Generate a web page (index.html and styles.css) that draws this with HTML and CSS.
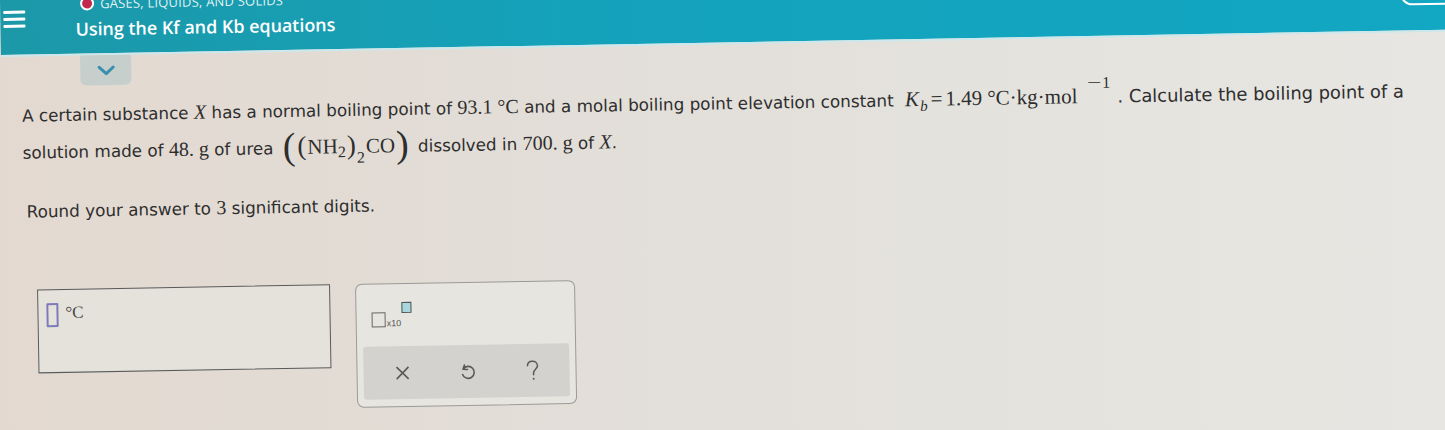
FILE: index.html
```html
<!DOCTYPE html>
<html>
<head>
<meta charset="utf-8">
<link rel="stylesheet" href="styles.css">
</head>
<body>
<div class="screen">
  <header class="topbar">
    <div class="menu"><span></span><span></span><span></span></div>
    <div class="heading">
      <div class="crumb"><span class="dot"></span>GASES, LIQUIDS, AND SOLIDS</div>
      <div class="title">Using the Kf and Kb equations</div>
    </div>
    <div class="corner-btn"></div>
  </header>
  <div class="tab">
    <svg width="18" height="11" viewBox="0 0 18 11"><path d="M2 2 L9 8.5 L16 2" fill="none" stroke="#3a8fb0" stroke-width="3" stroke-linecap="round" stroke-linejoin="round"/></svg>
  </div>
  <main class="content">
    <p class="q">A certain substance <i class="m">X</i> has a normal boiling point of <span class="m">93.1&nbsp;°C</span> and a molal boiling point elevation constant <span class="m kb"><i>K</i><sub class="sb"><i>b</i></sub><span class="eq">=</span>1.49&nbsp;°C·kg·mol<sup class="sp"><span class="minus">−</span>1</sup></span><span class="far">. Calculate the boiling point of a</span><br>solution made of <span class="m">48.&nbsp;g</span> of urea <span class="m urea"><span class="bp">(</span><span class="ip">(</span>NH<sub class="s2">2</sub><span class="ip">)</span><sub class="s2b">2</sub>CO<span class="bp">)</span></span> dissolved in <span class="m">700.&nbsp;g</span> of <i class="m">X</i>.</p>
    <p class="round">Round your answer to <span class="m">3</span> significant digits.</p>
    <div class="answer-row">
      <div class="answer-box">
        <span class="slot"></span><span class="unit">°C</span>
      </div>
      <div class="tools">
        <div class="sci">
          <span class="sq"></span><span class="x10">x10</span><span class="sup-sq"></span>
        </div>
        <div class="band">
          <svg class="ico" width="16" height="16" viewBox="0 0 16 16"><path d="M2 2 L14 14 M14 2 L2 14" stroke="#5a5a5a" stroke-width="1.6" fill="none"/></svg>
          <svg class="ico" width="16" height="18" viewBox="0 0 16 18"><path d="M5 2 L3.5 6.2 L8 6.6 M3.8 6 A6 6 0 1 1 3 11.5" stroke="#5a5a5a" stroke-width="1.6" fill="none" stroke-linecap="round" stroke-linejoin="round"/></svg>
          <svg class="ico" width="16" height="22" viewBox="0 0 16 22"><path d="M3 6 C3 2.5 6 1.5 8 1.5 C11 1.5 13 3.5 13 6 C13 9 9 10 9 13 L9 15" stroke="#5a5a5a" stroke-width="1.5" fill="none" stroke-linecap="round"/><circle cx="9" cy="19" r="1" fill="#5a5a5a"/></svg>
        </div>
      </div>
    </div>
  </main>
</div>
</body>
</html>
```
FILE: styles.css
```css
html, body {
  margin: 0;
  height: 100%;
}
body {
  overflow: hidden;
  background: linear-gradient(90deg, #e3d9d0 0%, #e2ddd7 35%, #e4e2dd 65%, #e8e6e2 100%);
  font-family: "DejaVu Sans", Verdana, sans-serif;
  color: #2e2e2e;
}
.screen {
  width: 1470px;
  height: 430px;
  transform: rotate(-1deg);
  transform-origin: 0 0;
}
.topbar {
  height: 55px;
  background: linear-gradient(90deg, #1c98a8 0%, #14a2bb 40%, #12a7c3 100%);
  border-bottom: 2px solid #cde8ec;
  display: flex;
  align-items: flex-start;
}
.menu {
  width: 22px;
  margin: 11px 0 0 3px;
  display: flex;
  flex-direction: column;
  gap: 4.5px;
}
.menu span {
  display: block;
  height: 2.5px;
  background: #fff;
  border-radius: 1px;
}
.heading {
  margin-left: 50px;
  margin-top: -2px;
}
.crumb {
  display: flex;
  align-items: center;
  font-family: "Open Sans", sans-serif;
  font-size: 13px;
  line-height: 14px;
  color: rgba(255,255,255,0.88);
  padding-left: 5px;
  letter-spacing: 0.2px;
}
.dot {
  width: 10px;
  height: 10px;
  border-radius: 50%;
  background: #c2284c;
  border: 2px solid #fff;
  margin-right: 6px;
}
.title {
  margin-top: 7px;
  font-family: "Open Sans", sans-serif;
  font-weight: 600;
  font-size: 17.9px;
  line-height: 22px;
  color: #fff;
}
.corner-btn {
  margin-left: auto;
  margin-top: -10px;
  width: 70px;
  height: 40px;
  border: 2px solid #fff;
  border-radius: 12px;
  box-sizing: border-box;
}
.tab {
  margin-left: 79px;
  width: 51px;
  height: 30px;
  background: #c6cfcc;
  border-radius: 0 0 6px 6px;
  display: flex;
  align-items: center;
  justify-content: center;
}
.content {
  padding-left: 20px;
}
.q {
  margin: 10px 0 0;
  width: 1430px;
  font-size: 16.8px;
  line-height: 36px;
}
.m {
  font-family: "Liberation Serif", "Times New Roman", serif;
  font-size: 20px;
}
i.m, .m i {
  font-style: italic;
}
.kb {
  font-size: 21px;
  margin-left: 6px;
}
.far {
  font-size: 17.9px;
}
.sb {
  font-size: 15px;
  vertical-align: -5px;
  line-height: 0;
  margin-left: 1px;
}
.eq {
  margin: 0 3px 0 3px;
}
.sp {
  font-size: 16px;
  vertical-align: 15px;
  line-height: 0;
  margin: 0 7px 0 9px;
}
.minus {
  display: inline-block;
  transform: scaleX(1.6);
  margin: 0 4px 0 3px;
}
.urea {
  line-height: 0;
  font-size: 21px;
  margin: 0 3px;
}
.bp {
  font-size: 38px;
  vertical-align: -5px;
  line-height: 0;
  margin: 0 1px;
}
.ip {
  font-size: 27px;
  vertical-align: -1px;
  line-height: 0;
  margin: 0 1px;
}
.s2 {
  font-size: 16px;
  vertical-align: -4px;
  line-height: 0;
}
.s2b {
  font-size: 16px;
  vertical-align: -10px;
  line-height: 0;
  margin-right: 1px;
}
.round {
  margin: 22px 0 0 3px;
  font-size: 16.8px;
  line-height: 36px;
}
.answer-row {
  margin-top: 60px;
  padding-left: 12px;
  display: flex;
  align-items: flex-start;
  gap: 25px;
}
.answer-box {
  width: 293px;
  height: 84px;
  box-sizing: border-box;
  border: 1.5px solid #5a5a5a;
  background: #e5e2dc;
  display: flex;
  align-items: flex-start;
  padding: 13px 0 0 8px;
}
.slot {
  width: 12px;
  height: 24px;
  box-sizing: border-box;
  border: 2px solid #7e7bb9;
  border-radius: 1px;
}
.unit {
  font-family: "Liberation Serif", serif;
  font-size: 17px;
  color: #444;
  margin-left: 7px;
  line-height: 20px;
}
.tools {
  width: 220px;
  height: 124px;
  box-sizing: border-box;
  border: 1.5px solid #9a9a98;
  border-radius: 7px;
  background: #e7e5e0;
  padding: 0 6px 7px;
  display: flex;
  flex-direction: column;
}
.sci {
  height: 62px;
  display: flex;
  align-items: flex-start;
  padding: 18px 0 0 9px;
  box-sizing: border-box;
}
.sq {
  width: 14px;
  height: 15px;
  box-sizing: border-box;
  border: 1.5px solid #666;
  margin-top: 10px;
}
.x10 {
  font-family: "Liberation Sans", sans-serif;
  font-size: 9px;
  color: #555;
  margin-top: 16px;
  margin-left: 1px;
}
.sup-sq {
  width: 10px;
  height: 11px;
  box-sizing: border-box;
  border: 1.5px solid #555;
  background: #a8d6da;
}
.band {
  flex: 1;
  background: #d3d2ce;
  border-radius: 3px;
  display: flex;
  align-items: center;
  justify-content: center;
  gap: 49px;
  padding-left: 2px;
}
```
